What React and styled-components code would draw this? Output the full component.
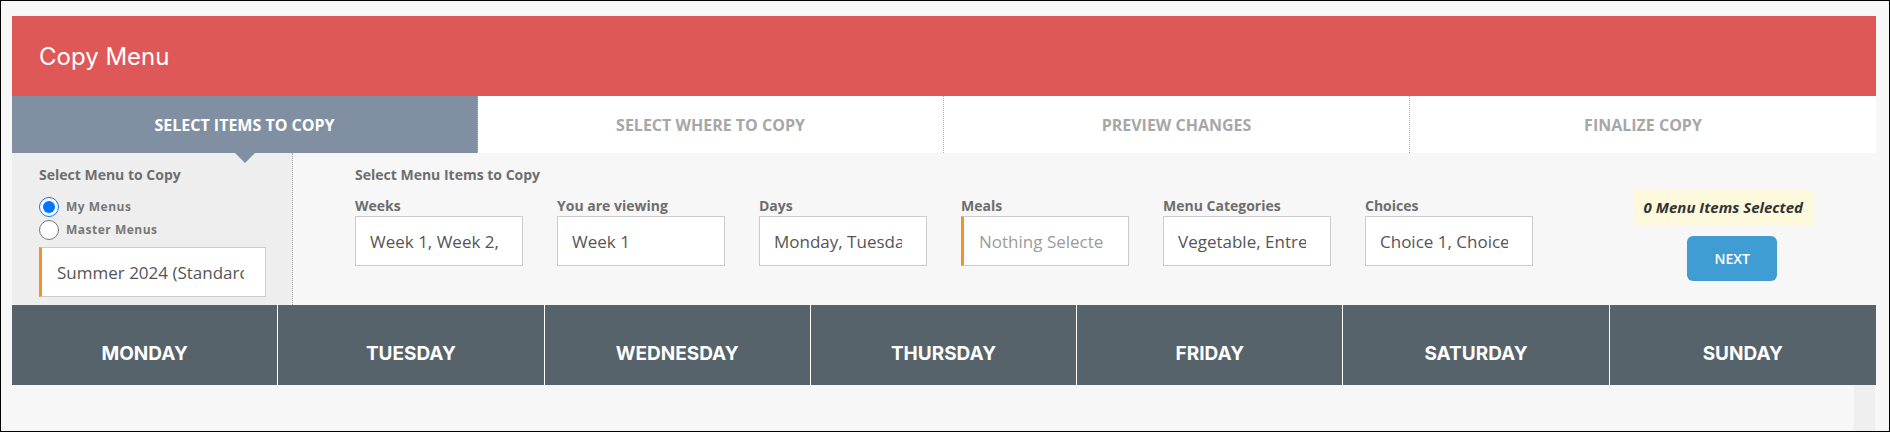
import React from "react";
import styled, { createGlobalStyle } from "styled-components";

const GlobalStyle = createGlobalStyle`
  body {
    margin: 0;
    background: #f7f7f7;
    font-family: "Open Sans", "Liberation Sans", sans-serif;
  }
`;

const Frame = styled.div`
  width: 1890px;
  height: 432px;
  box-sizing: border-box;
  border: 1px solid #000;
  background: #f7f7f7;
  padding: 15px 0 0 11px;
  overflow: hidden;
`;

const Card = styled.div`
  width: 1864px;
`;

const Header = styled.div`
  height: 80px;
  background: #df5858;
  display: flex;
  align-items: center;
  padding-left: 27px;
  font-family: Inter, "Liberation Sans", sans-serif;
  font-size: 24px;
  font-weight: 400;
  color: #fff;
`;

const Tabs = styled.div`
  display: grid;
  grid-template-columns: repeat(4, 1fr);
  height: 57px;
`;

const Tab = styled.div`
  position: relative;
  display: flex;
  align-items: center;
  justify-content: center;
  background: ${p => (p.$active ? "#8090a2" : "#ffffff")};
  color: ${p => (p.$active ? "#ffffff" : "#a7a7a7")};
  font-size: 16px;
  font-weight: 700;
  text-transform: uppercase;
  border-right: 1px dotted #aeaeae;

  &:last-child {
    border-right: none;
  }

  &::after {
    content: "";
    display: ${p => (p.$active ? "block" : "none")};
    position: absolute;
    left: 50%;
    bottom: -10px;
    transform: translateX(-50%);
    border-left: 10px solid transparent;
    border-right: 10px solid transparent;
    border-top: 10px solid #8090a2;
    z-index: 2;
  }
`;

const Content = styled.div`
  display: flex;
  height: 152px;
`;

const LeftPanel = styled.div`
  width: 281px;
  box-sizing: border-box;
  background: #eeeeee;
  border-right: 1px dotted #aaaaaa;
  padding: 12px 0 0 27px;
`;

const SectionTitle = styled.div`
  font-size: 14px;
  line-height: 20px;
  font-weight: 700;
  color: #6e6e6e;
`;

const RadioGroup = styled.div`
  display: flex;
  flex-direction: column;
  margin-top: 10px;
`;

const RadioRow = styled.label`
  display: flex;
  align-items: center;
  gap: 7px;
  height: 23px;
  font-size: 12px;
  font-weight: 700;
  letter-spacing: 0.5px;
  color: #777777;
`;

const Radio = styled.input`
  width: 20px;
  height: 20px;
  margin: 0;
`;

const SelectBox = styled.div`
  display: flex;
  align-items: center;
  width: ${p => p.$width || "168px"};
  height: 50px;
  margin-top: ${p => p.$top || "0"};
  box-sizing: border-box;
  background: #fff;
  border: 1px solid #cccccc;
  border-left: ${p => (p.$accent ? "3px solid #f39325" : "1px solid #cccccc")};
  padding: 0 ${p => p.$padRight || "24px"} 0 ${p => (p.$accent ? "15px" : "14px")};
  font-size: 17px;
  color: ${p => (p.$placeholder ? "#9b9b9b" : "#555555")};
`;

const Value = styled.span`
  flex: 1;
  min-width: 0;
  overflow: hidden;
  white-space: nowrap;
`;

const RightPanel = styled.div`
  flex: 1;
  display: flex;
  padding: 12px 63px 0 62px;
`;

const FieldsArea = styled.div`
  display: flex;
  flex-direction: column;
`;

const FieldRow = styled.div`
  display: flex;
  gap: 34px;
  margin-top: 12px;
`;

const Field = styled.div`
  width: 168px;
`;

const FieldLabel = styled.div`
  font-size: 14px;
  line-height: 18px;
  margin-bottom: 1px;
  font-weight: 700;
  color: #6e6e6e;
`;

const ActionArea = styled.div`
  margin-left: auto;
  padding-top: 24px;
  display: flex;
  flex-direction: column;
  align-items: center;
`;

const SelectedCount = styled.div`
  display: flex;
  align-items: center;
  height: 36px;
  padding: 0 10px;
  background: #fcf9dc;
  font-size: 15px;
  font-weight: 700;
  font-style: italic;
  color: #333333;
`;

const NextButton = styled.button`
  margin: 11px 0 0 18px;
  width: 90px;
  height: 45px;
  border: none;
  border-radius: 6px;
  background: #3f9dd3;
  color: #fff;
  font-family: "Open Sans", "Liberation Sans", sans-serif;
  font-size: 14px;
  font-weight: 600;
`;

const DayBar = styled.div`
  display: grid;
  grid-template-columns: repeat(7, 1fr);
  height: 80px;
`;

const DayCell = styled.div`
  display: flex;
  align-items: center;
  justify-content: center;
  box-sizing: border-box;
  padding-top: 17px;
  background: #56636b;
  border-right: 1px solid #ffffff;
  color: #fff;
  font-family: Inter, "Liberation Sans", sans-serif;
  font-size: 19px;
  font-weight: 700;

  &:last-child {
    border-right: none;
  }
`;

const Below = styled.div`
  display: flex;
  justify-content: flex-end;
  height: 46px;
`;

const ScrollTrack = styled.div`
  width: 21px;
  margin-right: 1px;
  background: #efefef;
`;

const tabs = ["Select Items to Copy", "Select Where to Copy", "Preview Changes", "Finalize Copy"];

const fields = [
  { label: "Weeks", value: "Week 1, Week 2, Week 3, Week 4" },
  { label: "You are viewing", value: "Week 1" },
  { label: "Days", value: "Monday, Tuesday, Wednesday" },
  { label: "Meals", value: "Nothing Selected", placeholder: true, accent: true },
  { label: "Menu Categories", value: "Vegetable, Entree, Fruit" },
  { label: "Choices", value: "Choice 1, Choice 2" },
];

const days = ["Monday", "Tuesday", "Wednesday", "Thursday", "Friday", "Saturday", "Sunday"];

export default function App() {
  return (
    <>
      <GlobalStyle />
      <Frame>
        <Card>
          <Header>Copy Menu</Header>
          <Tabs>
            {tabs.map((t, i) => (
              <Tab key={t} $active={i === 0}>
                {t}
              </Tab>
            ))}
          </Tabs>
          <Content>
            <LeftPanel>
              <SectionTitle>Select Menu to Copy</SectionTitle>
              <RadioGroup>
                <RadioRow>
                  <Radio type="radio" name="source" defaultChecked />
                  My Menus
                </RadioRow>
                <RadioRow>
                  <Radio type="radio" name="source" />
                  Master Menus
                </RadioRow>
              </RadioGroup>
              <SelectBox $accent $width="227px" $top="6px" $padRight="21px">
                <Value>Summer 2024 (Standard Menu)</Value>
              </SelectBox>
            </LeftPanel>
            <RightPanel>
              <FieldsArea>
                <SectionTitle>Select Menu Items to Copy</SectionTitle>
                <FieldRow>
                  {fields.map(f => (
                    <Field key={f.label}>
                      <FieldLabel>{f.label}</FieldLabel>
                      <SelectBox $accent={f.accent} $placeholder={f.placeholder}>
                        <Value>{f.value}</Value>
                      </SelectBox>
                    </Field>
                  ))}
                </FieldRow>
              </FieldsArea>
              <ActionArea>
                <SelectedCount>0 Menu Items Selected</SelectedCount>
                <NextButton>NEXT</NextButton>
              </ActionArea>
            </RightPanel>
          </Content>
          <DayBar>
            {days.map(d => (
              <DayCell key={d}>{d.toUpperCase()}</DayCell>
            ))}
          </DayBar>
          <Below>
            <ScrollTrack />
          </Below>
        </Card>
      </Frame>
    </>
  );
}
